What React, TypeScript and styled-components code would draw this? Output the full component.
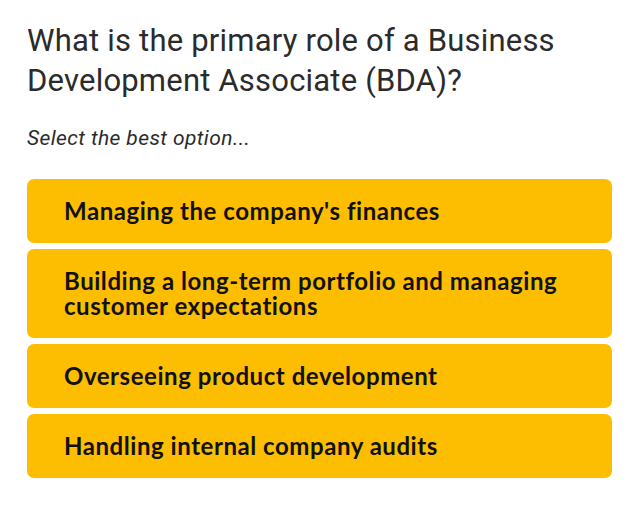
import React from "react";
import styled, { createGlobalStyle } from "styled-components";

const Global = createGlobalStyle`
  html, body { margin: 0; padding: 0; background: #ffffff; }
  * { box-sizing: border-box; }
`;

const Page = styled.div`
  padding: 21px 26px 0 27px;
  display: flex;
  flex-direction: column;
`;

const Question = styled.h1`
  margin: 0;
  font-family: Roboto, "Liberation Sans", sans-serif;
  font-weight: 400;
  font-size: 31px;
  line-height: 40px;
  letter-spacing: 0.2px;
  color: #2b2b2b;
`;

const Hint = styled.p`
  margin: 25px 0 0 0;
  font-family: Roboto, "Liberation Sans", sans-serif;
  font-style: italic;
  font-size: 21px;
  line-height: 24px;
  letter-spacing: 0.4px;
  color: #2b2b2b;
`;

const Options = styled.div`
  margin-top: 29px;
  display: flex;
  flex-direction: column;
  gap: 6px;
`;

const Option = styled.button`
  display: block;
  width: 100%;
  text-align: left;
  border: none;
  border-radius: 7px;
  background: #fdbd00;
  padding: 19px 40px 20px 37px;
  font-family: Lato, "Noto Sans", sans-serif;
  font-weight: 700;
  font-size: 24px;
  line-height: 25px;
  letter-spacing: 0.55px;
  color: #111111;
  cursor: pointer;
`;

const options = [
  "Managing the company's finances",
  "Building a long-term portfolio and managing customer expectations",
  "Overseeing product development",
  "Handling internal company audits",
];

export default function App() {
  return (
    <>
      <Global />
      <Page>
        <Question>
          What is the primary role of a Business Development Associate (BDA)?
        </Question>
        <Hint>Select the best option...</Hint>
        <Options>
          {options.map((o) => (
            <Option key={o}>{o}</Option>
          ))}
        </Options>
      </Page>
    </>
  );
}
